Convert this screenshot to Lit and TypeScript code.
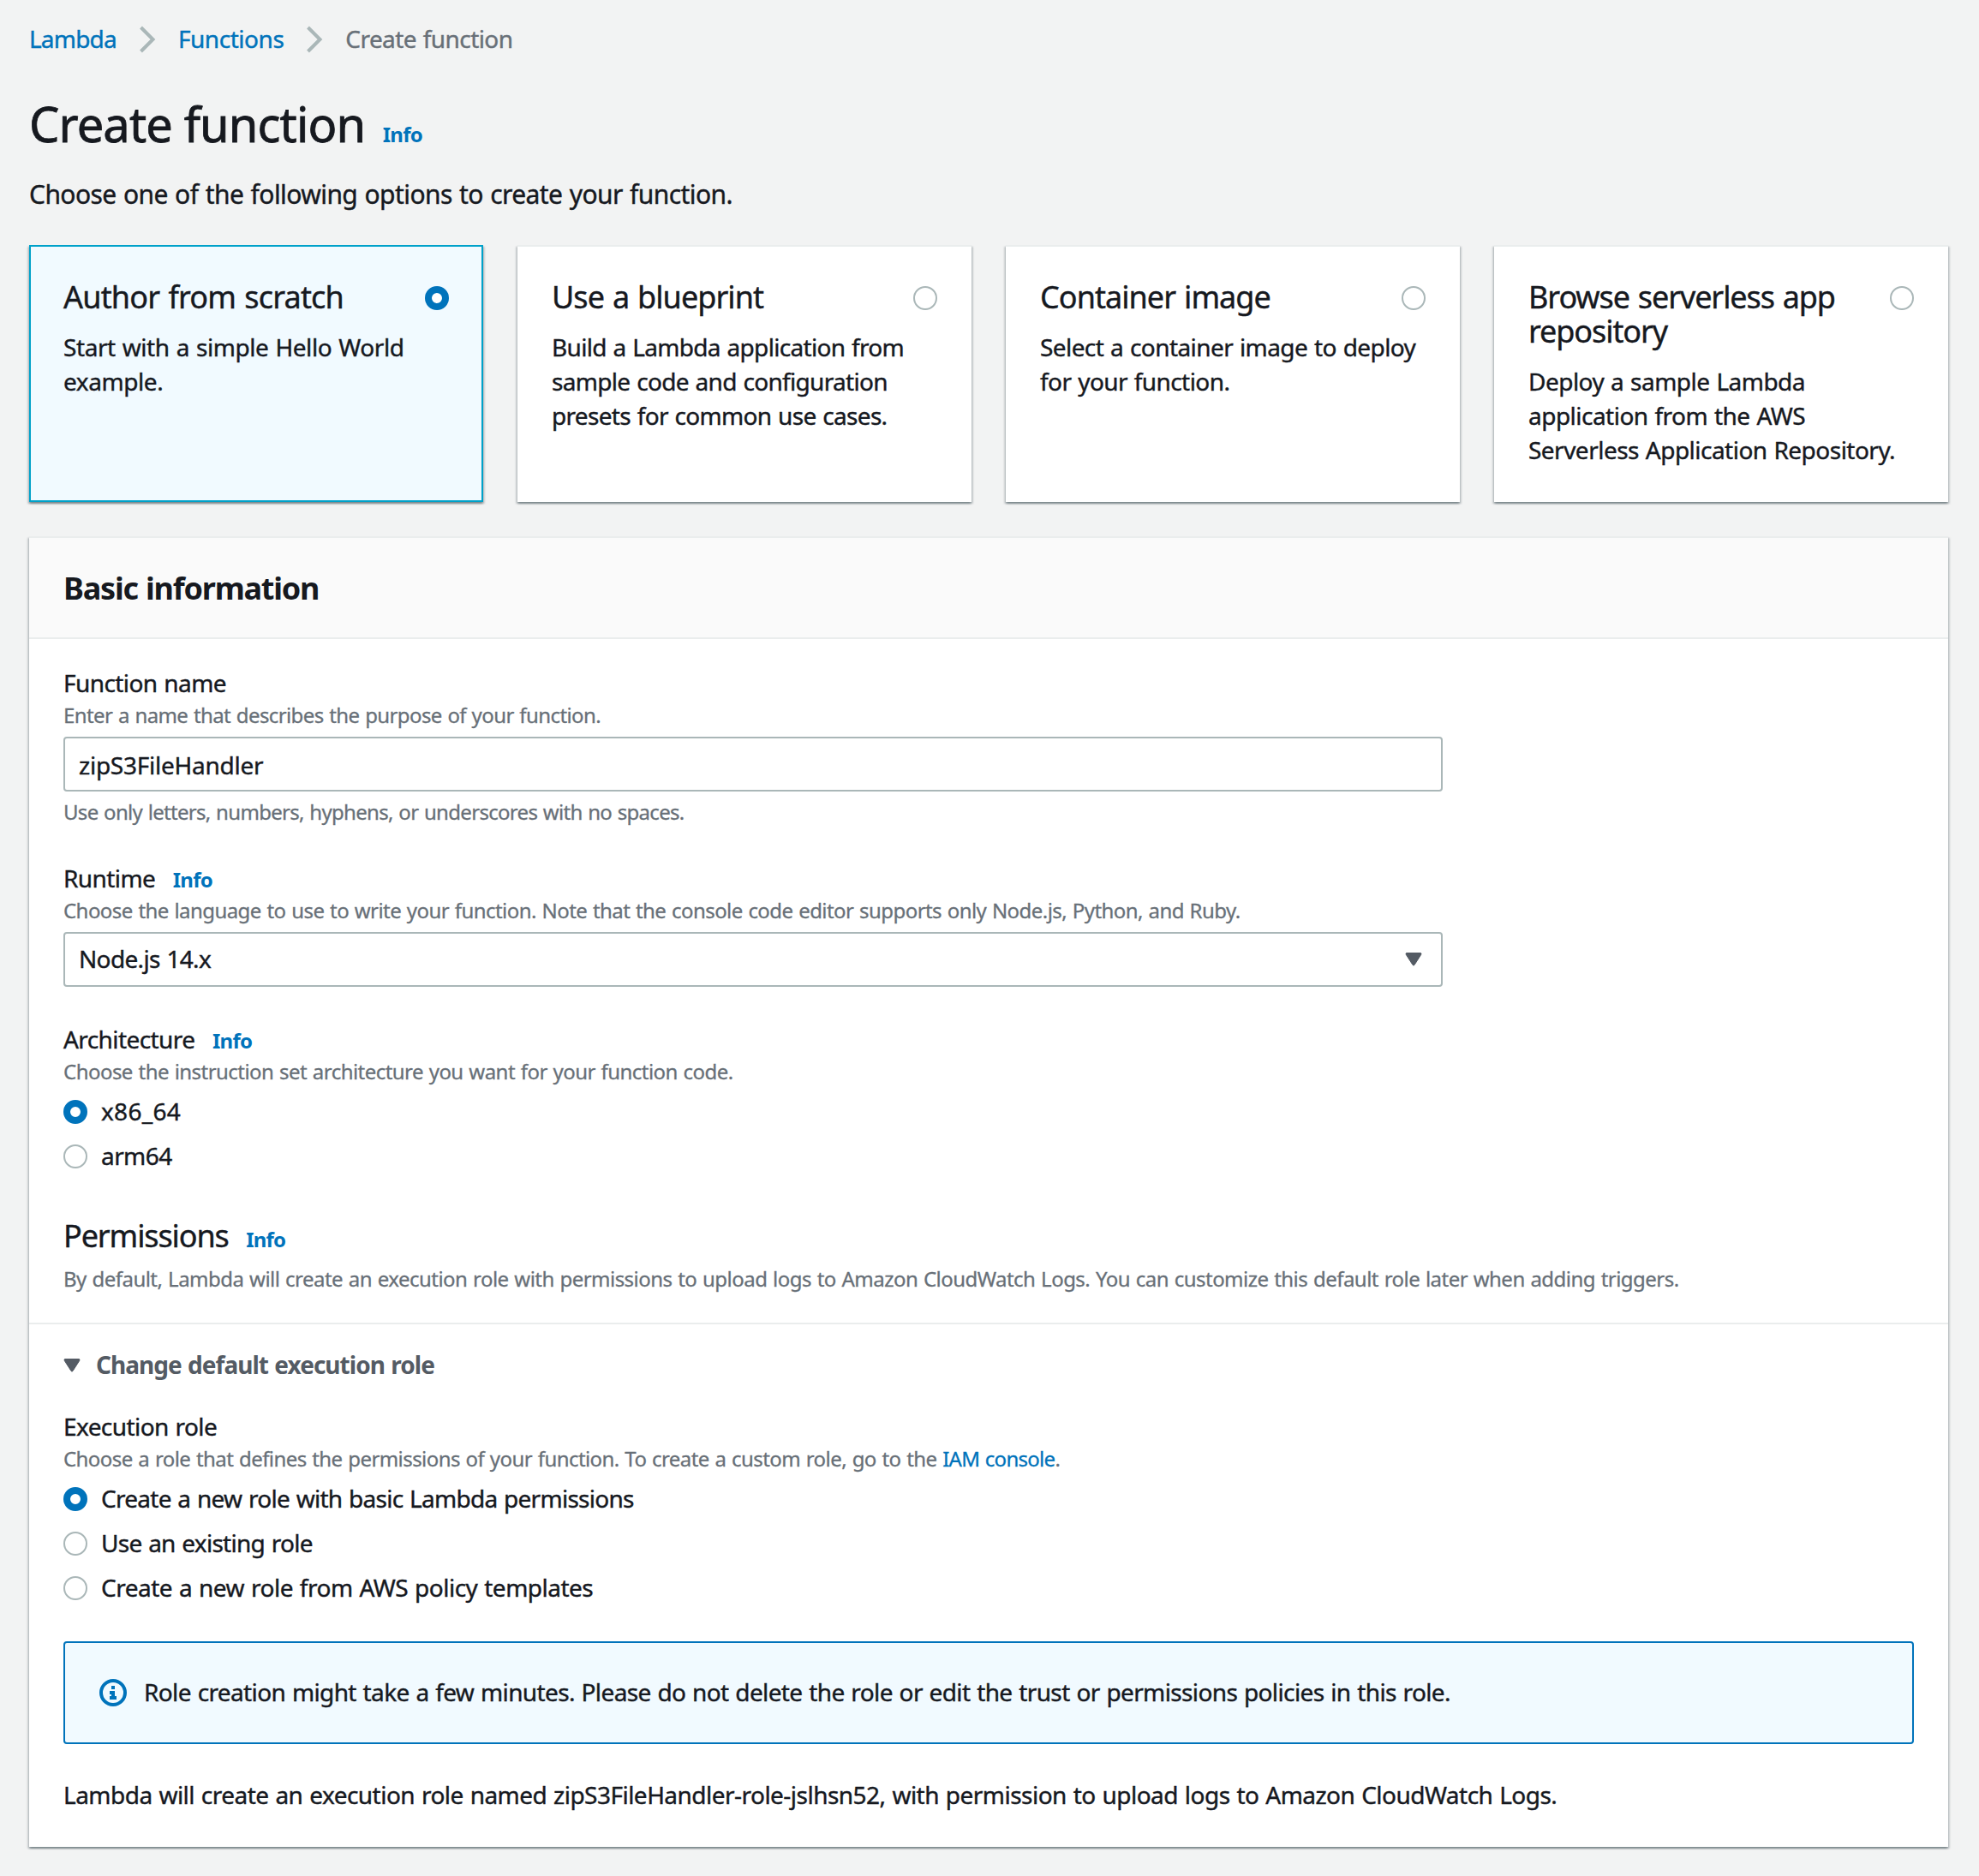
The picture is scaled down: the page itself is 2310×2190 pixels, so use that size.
import { LitElement, html, css, svg } from "lit";
import { customElement, property, state } from "lit/decorators.js";
import { classMap } from "lit/directives/class-map.js";

interface Method {
  title: string;
  text: string;
  name: string;
}

interface Option {
  label: string;
  name: string;
}

const METHODS: Method[] = [
  { name: "scratch", title: "Author from scratch", text: "Start with a simple Hello World example." },
  { name: "blueprint", title: "Use a blueprint", text: "Build a Lambda application from sample code and configuration presets for common use cases." },
  { name: "container", title: "Container image", text: "Select a container image to deploy for your function." },
  { name: "repository", title: "Browse serverless app repository", text: "Deploy a sample Lambda application from the AWS Serverless Application Repository." },
];

const ARCHITECTURES: Option[] = [
  { name: "x86", label: "x86_64" },
  { name: "arm", label: "arm64" },
];

const ROLES: Option[] = [
  { name: "basic", label: "Create a new role with basic Lambda permissions" },
  { name: "existing", label: "Use an existing role" },
  { name: "template", label: "Create a new role from AWS policy templates" },
];

const chevron = svg`<svg class="chevron" viewBox="0 0 20 32"><path d="M2.5 2 L16.5 16 L2.5 30" fill="none" stroke="#aab7b8" stroke-width="4"/></svg>`;
const caret = svg`<svg class="caret" viewBox="0 0 20 16"><path d="M2 .5 H18 Q19.6 .5 18.7 2.4 L11 14.4 Q10 15.8 9 14.4 L1.3 2.4 Q.4 .5 2 .5 Z" fill="#545b64" stroke="#545b64" stroke-width="1"/></svg>`;

/** Round radio control, filled ring when checked. */
@customElement("radio-dot")
class RadioDot extends LitElement {
  @property({ type: Boolean }) checked = false;

  static styles = css`
    :host { display: block; flex: none; width: 28px; height: 28px; }
    .ring { box-sizing: border-box; width: 28px; height: 28px; border-radius: 50%; background: #fff; border: 2px solid #aab7b8; }
    .on { border: 8px solid #0073bb; }
  `;

  render() {
    return html`<div class=${classMap({ ring: true, on: this.checked })}></div>`;
  }
}

@customElement("app-root")
class AppRoot extends LitElement {
  @state() private method = 0;
  @state() private arch = 0;
  @state() private role = 0;

  static styles = css`
    :host {
      display: block;
      box-sizing: border-box;
      min-height: 2190px;
      padding: 25px 36px 34px 34px;
      background: #f2f3f3;
      color: #16191f;
      font-family: "Noto Sans", "Open Sans", sans-serif;
      font-size: 28px;
      line-height: 40px;
      letter-spacing: -0.58px;
      word-spacing: 1.1px;
      -webkit-text-stroke: 0.4px;
    }
    * { box-sizing: border-box; }
    h1, h2, h3, p { margin: 0; font-weight: 400; }
    a { color: #0073bb; text-decoration: none; cursor: pointer; }

    .crumbs { display: flex; align-items: center; height: 40px; color: #687078; }
    .crumbs a { letter-spacing: -0.46px; }
    .crumbs a:first-child { letter-spacing: -0.8px; }
    .chevron { display: block; width: 20px; height: 32px; margin: 2px 26px 0 26px; }
    .info { font-size: 24px; font-weight: 700; letter-spacing: -0.75px; margin-left: 20.5px; -webkit-text-stroke: 0; }

    .title { display: flex; align-items: baseline; height: 72px; margin-top: 43px; line-height: 72px; }
    .title h1 { font-size: 56px; letter-spacing: -0.87px; word-spacing: 0; -webkit-text-stroke: 0.8px; }
    .lead { margin-top: 27px; font-size: 30px; letter-spacing: -0.58px; }

    .cards { display: grid; grid-template-columns: repeat(4, 530px); gap: 40px; margin-top: 39px; }
    .card, .panel {
      background: #fff;
      box-shadow: 0 2px 2px 0 rgba(0, 28, 36, 0.3), 2px 2px 2px 0 rgba(0, 28, 36, 0.15), -2px 2px 2px 0 rgba(0, 28, 36, 0.15);
    }
    .card { display: flex; align-items: flex-start; padding: 38px 40px 41px; border-top: 2px solid #eaeded; cursor: pointer; }
    .card.selected { padding: 38px 38px 39px; border: 2px solid #00a1c9; background: #f1faff; }
    .card-text { flex: 1; min-width: 0; margin-right: -28px; }
    .card-text h3 { padding: 1px 60px 0 0; font-size: 36px; letter-spacing: -0.95px; word-spacing: 1.5px; }
    .card-text p { margin-top: 18px; }
    .card radio-dot { margin-top: 8px; }
    .scratch h3 { letter-spacing: -0.8px; }
    .scratch p { letter-spacing: -0.42px; }
    .blueprint p { letter-spacing: -0.68px; word-spacing: 1.1px; }
    .repository h3 { letter-spacing: -1.08px; }
    .repository p { letter-spacing: -0.52px; }

    .panel { margin-top: 40px; border-top: 2px solid #eaeded; padding-bottom: 41px; }
    .panel-head { padding: 39px 40px 37px; background: #fafafa; border-bottom: 2px solid #eaeded; }
    .panel-head h2 { font-size: 36px; font-weight: 700; letter-spacing: -1.22px; -webkit-text-stroke: 0; }
    .section { padding: 31px 40px 35px; }
    .section.ruled { border-top: 2px solid #eaeded; padding: 27px 40px 0; }

    .label { display: flex; align-items: baseline; height: 40px; }
    .hint { margin-top: 1px; font-size: 24px; line-height: 33px; letter-spacing: -0.56px; word-spacing: 1px; color: #687078; -webkit-text-stroke: 0.3px; }
    .control { display: flex; align-items: center; width: 1610px; height: 64px; margin-top: 9px; padding: 0 16px; border: 2px solid #aab7b8; border-radius: 4px; background: #fff; }
    .control.name { padding-top: 2px; letter-spacing: -0.25px; }
    .control.pick { justify-content: space-between; padding: 0 22px 2px 16px; letter-spacing: -0.67px; }
    .caret { display: block; flex: none; width: 20px; height: 16px; margin-top: 2px; }
    .constraint { margin-top: 7px; letter-spacing: -0.69px; }
    .name-hint { letter-spacing: -0.6px; }
    .arch-hint { letter-spacing: -0.54px; }
    .field + .field { margin-top: 41px; }

    .radios { display: flex; flex-direction: column; gap: 12px; margin-top: 10px; }
    .radio { display: flex; align-items: center; gap: 16px; height: 40px; cursor: pointer; }
    .radio radio-dot { margin-top: 2px; }
    .x86 { letter-spacing: 0.3px; }
    .basic, .existing { letter-spacing: -0.73px; }
    .template { letter-spacing: -0.5px; }

    .permissions { display: flex; align-items: baseline; height: 40px; margin-top: 54px; }
    .permissions h3 { font-size: 36px; letter-spacing: -1.12px; }
    .permissions-note { margin-top: 13px; letter-spacing: -0.53px; }

    .expander { display: flex; align-items: center; gap: 18px; margin-bottom: 32px; font-weight: 700; letter-spacing: -0.98px; color: #545b64; -webkit-text-stroke: 0; }
    .role-hint { letter-spacing: -0.57px; }
    .role-hint a { letter-spacing: -0.72px; }
    .alert { display: flex; align-items: center; gap: 20px; height: 120px; margin-top: 43px; padding: 0 40px; border: 2px solid #0073bb; border-radius: 4px; background: #f1faff; }
    .alert p { margin-top: -2px; letter-spacing: -0.625px; }
    .alert-icon { display: block; flex: none; width: 32px; height: 32px; }
    .outcome { margin-top: 39px; letter-spacing: -0.525px; }
  `;

  private radios(options: Option[], selected: number, pick: (i: number) => void) {
    return html`<div class="radios">
      ${options.map((o, i) => html`<div class="radio ${o.name}" @click=${() => pick(i)}>
        <radio-dot ?checked=${i === selected}></radio-dot><span>${o.label}</span>
      </div>`)}
    </div>`;
  }

  render() {
    return html`
      <nav class="crumbs"><a>Lambda</a>${chevron}<a>Functions</a>${chevron}<span>Create function</span></nav>
      <div class="title"><h1>Create function</h1><a class="info">Info</a></div>
      <p class="lead">Choose one of the following options to create your function.</p>

      <div class="cards">
        ${METHODS.map((m, i) => html`<div class=${classMap({ card: true, [m.name]: true, selected: i === this.method })} @click=${() => (this.method = i)}>
          <div class="card-text"><h3>${m.title}</h3><p>${m.text}</p></div>
          <radio-dot ?checked=${i === this.method}></radio-dot>
        </div>`)}
      </div>

      <div class="panel">
        <div class="panel-head"><h2>Basic information</h2></div>
        <div class="section">
          <div class="field">
            <div class="label">Function name</div>
            <p class="hint name-hint">Enter a name that describes the purpose of your function.</p>
            <div class="control name">zipS3FileHandler</div>
            <p class="hint constraint">Use only letters, numbers, hyphens, or underscores with no spaces.</p>
          </div>
          <div class="field">
            <div class="label">Runtime<a class="info">Info</a></div>
            <p class="hint">Choose the language to use to write your function. Note that the console code editor supports only Node.js, Python, and Ruby.</p>
            <div class="control pick"><span>Node.js 14.x</span>${caret}</div>
          </div>
          <div class="field">
            <div class="label">Architecture<a class="info">Info</a></div>
            <p class="hint arch-hint">Choose the instruction set architecture you want for your function code.</p>
            ${this.radios(ARCHITECTURES, this.arch, (i) => (this.arch = i))}
          </div>
          <div class="permissions"><h3>Permissions</h3><a class="info">Info</a></div>
          <p class="hint permissions-note">By default, Lambda will create an execution role with permissions to upload logs to Amazon CloudWatch Logs. You can customize this default role later when adding triggers.</p>
        </div>
        <div class="section ruled">
          <div class="expander">${caret}<span>Change default execution role</span></div>
          <div class="field">
            <div class="label">Execution role</div>
            <p class="hint role-hint">Choose a role that defines the permissions of your function. To create a custom role, go to the <a>IAM console</a>.</p>
            ${this.radios(ROLES, this.role, (i) => (this.role = i))}
          </div>
          <div class="alert">
            <svg class="alert-icon" viewBox="0 0 32 32">
              <circle cx="16" cy="16" r="14" fill="none" stroke="#0073bb" stroke-width="4"/>
              <path d="M14 8h4v4h-4z M12 14h6v6h2v4h-8v-4h2v-2h-2z" fill="#0073bb"/>
            </svg>
            <p>Role creation might take a few minutes. Please do not delete the role or edit the trust or permissions policies in this role.</p>
          </div>
          <p class="outcome">Lambda will create an execution role named zipS3FileHandler-role-jslhsn52, with permission to upload logs to Amazon CloudWatch Logs.</p>
        </div>
      </div>
    `;
  }
}
